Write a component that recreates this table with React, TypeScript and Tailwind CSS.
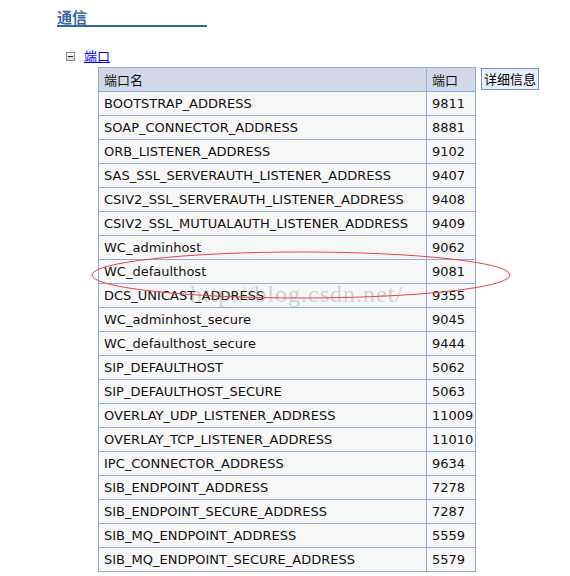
import React from "react";

const rows: [string, string][] = [
  ["BOOTSTRAP_ADDRESS", "9811"],
  ["SOAP_CONNECTOR_ADDRESS", "8881"],
  ["ORB_LISTENER_ADDRESS", "9102"],
  ["SAS_SSL_SERVERAUTH_LISTENER_ADDRESS", "9407"],
  ["CSIV2_SSL_SERVERAUTH_LISTENER_ADDRESS", "9408"],
  ["CSIV2_SSL_MUTUALAUTH_LISTENER_ADDRESS", "9409"],
  ["WC_adminhost", "9062"],
  ["WC_defaulthost", "9081"],
  ["DCS_UNICAST_ADDRESS", "9355"],
  ["WC_adminhost_secure", "9045"],
  ["WC_defaulthost_secure", "9444"],
  ["SIP_DEFAULTHOST", "5062"],
  ["SIP_DEFAULTHOST_SECURE", "5063"],
  ["OVERLAY_UDP_LISTENER_ADDRESS", "11009"],
  ["OVERLAY_TCP_LISTENER_ADDRESS", "11010"],
  ["IPC_CONNECTOR_ADDRESS", "9634"],
  ["SIB_ENDPOINT_ADDRESS", "7278"],
  ["SIB_ENDPOINT_SECURE_ADDRESS", "7287"],
  ["SIB_MQ_ENDPOINT_ADDRESS", "5559"],
  ["SIB_MQ_ENDPOINT_SECURE_ADDRESS", "5579"],
];

const font = "font-['DejaVu_Sans','Noto_Sans_CJK_SC',sans-serif]";

export default function App() {
  return (
    <div className={`relative w-[570px] h-[576px] bg-white overflow-hidden text-[13px] text-[#111] ${font}`}>
      <div className="pl-[57px] pt-[9px]">
        <div className="text-[15px] leading-[16px] font-bold text-[#3a68a0] font-['Noto_Sans_CJK_SC',sans-serif]">通信</div>
        <div className="w-[150px] h-[2px] bg-[#33679f] mt-[0px]" />
      </div>
      <div className="flex items-center pl-[66px] mt-[22px] h-[14px]">
        <div className="w-[9px] h-[9px] border border-[#8c8c8c] bg-gradient-to-b from-white to-[#d8d8d8] flex items-center justify-center">
          <div className="w-[5px] h-[1px] bg-[#222]" />
        </div>
        <a className="ml-[9px] text-[#0000ee] underline leading-[14px] font-['Noto_Sans_CJK_SC',sans-serif]" href="#">
          端口
        </a>
      </div>
      <div className="flex items-start ml-[98px] mt-[4px]">
        <div className="grid grid-cols-[328px_49px] border-l border-t border-[#8caadc]">
          <div className="h-[24px] border-r border-b border-[#8caadc] bg-[#d1d9e7] flex items-center pl-[5px] pt-[1px] font-['Noto_Sans_CJK_SC',sans-serif]">
            端口名
          </div>
          <div className="h-[24px] border-r border-b border-[#8caadc] bg-[#d1d9e7] flex items-center pl-[5px] pt-[1px] font-['Noto_Sans_CJK_SC',sans-serif]">
            端口
          </div>
          {rows.map(([n, p]) => (
            <React.Fragment key={n}>
              <div className="h-[24px] border-r border-b border-[#8caadc] bg-[#f7f7f7] flex items-center pl-[5px] pt-[1px] whitespace-nowrap">
                {n}
              </div>
              <div className="h-[24px] border-r border-b border-[#8caadc] bg-[#f7f7f7] flex items-center pl-[5px] pt-[1px]">
                {p}
              </div>
            </React.Fragment>
          ))}
        </div>
        <button className="ml-[5px] mt-[1px] h-[22px] px-[2px] border border-[#6f91c6] bg-[#eaf0fb] text-[13px] leading-[20px] text-black font-['Noto_Sans_CJK_SC',sans-serif]">
          详细信息
        </button>
      </div>
      <div className="absolute left-[190px] top-[282px] text-[24px] leading-[24px] tracking-[1px] text-[rgba(150,150,150,0.4)] font-['Liberation_Serif',serif] whitespace-nowrap pointer-events-none">
        http://blog.csdn.net/
      </div>
      <svg className="absolute left-0 top-0 pointer-events-none" width="570" height="576">
        <ellipse cx="301" cy="275" rx="209" ry="23" fill="none" stroke="#e8434a" strokeWidth="1" />
      </svg>
    </div>
  );
}
